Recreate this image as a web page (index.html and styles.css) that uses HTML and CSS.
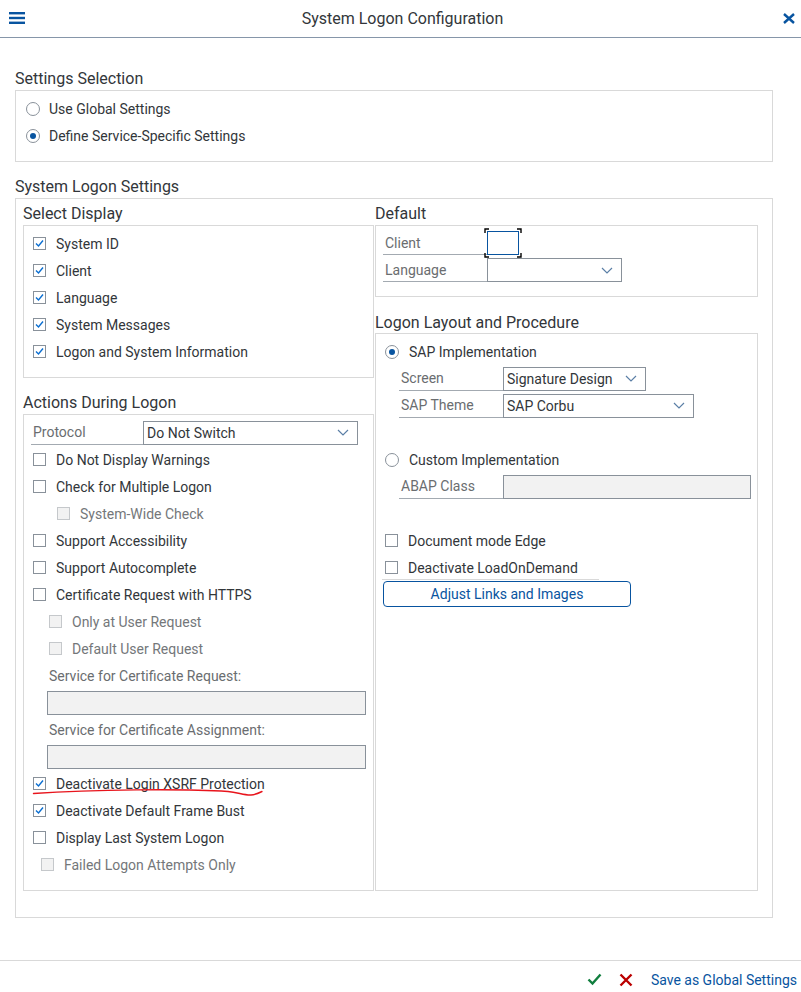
FILE: index.html
```html
<!DOCTYPE html>
<html lang="en">
<head>
<meta charset="utf-8">
<title>System Logon Configuration</title>
<link rel="stylesheet" href="styles.css">
</head>
<body>
<div class="page">
  <header class="bar">
    <svg class="menu" width="16" height="12" viewBox="0 0 16 12"><rect x="0" y="0" width="16" height="2.4" fill="#0854a0"/><rect x="0" y="4.8" width="16" height="2.4" fill="#0854a0"/><rect x="0" y="9.6" width="16" height="2.4" fill="#0854a0"/></svg>
    <div class="bar-title">System Logon Configuration</div>
    <svg class="close" width="12" height="11" viewBox="0 0 12 11"><path d="M1 1L11 10M11 1L1 10" stroke="#0854a0" stroke-width="2.4" fill="none"/></svg>
  </header>

  <main class="content">
    <div class="sec-title first">Settings Selection</div>
    <div class="box settings">
      <div class="row"><span class="radio"></span><span class="txt">Use Global Settings</span></div>
      <div class="row"><span class="radio on"></span><span class="txt">Define Service-Specific Settings</span></div>
    </div>

    <div class="sec-title">System Logon Settings</div>
    <div class="box outer">
      <div class="col">
        <div class="sub-title">Select Display</div>
        <div class="box sub display">
          <div class="row"><span class="cb on"><svg viewBox="0 0 11 11"><path d="M2 5.5L4.5 8L9 2.5" fill="none" stroke="#0a6ed1" stroke-width="1.4"/></svg></span><span class="txt">System ID</span></div>
          <div class="row"><span class="cb on"><svg viewBox="0 0 11 11"><path d="M2 5.5L4.5 8L9 2.5" fill="none" stroke="#0a6ed1" stroke-width="1.4"/></svg></span><span class="txt">Client</span></div>
          <div class="row"><span class="cb on"><svg viewBox="0 0 11 11"><path d="M2 5.5L4.5 8L9 2.5" fill="none" stroke="#0a6ed1" stroke-width="1.4"/></svg></span><span class="txt">Language</span></div>
          <div class="row"><span class="cb on"><svg viewBox="0 0 11 11"><path d="M2 5.5L4.5 8L9 2.5" fill="none" stroke="#0a6ed1" stroke-width="1.4"/></svg></span><span class="txt">System Messages</span></div>
          <div class="row"><span class="cb on"><svg viewBox="0 0 11 11"><path d="M2 5.5L4.5 8L9 2.5" fill="none" stroke="#0a6ed1" stroke-width="1.4"/></svg></span><span class="txt">Logon and System Information</span></div>
        </div>

        <div class="sub-title gap">Actions During Logon</div>
        <div class="box sub actions">
          <div class="row">
            <span class="flabel proto">Protocol</span>
            <span class="select w-proto"><span>Do Not Switch</span><svg width="12" height="7" viewBox="0 0 12 7"><path d="M1 1l5 5 5-5" fill="none" stroke="#5b7fa6" stroke-width="1.2"/></svg></span>
          </div>
          <div class="row"><span class="cb"></span><span class="txt">Do Not Display Warnings</span></div>
          <div class="row"><span class="cb"></span><span class="txt">Check for Multiple Logon</span></div>
          <div class="row ind2"><span class="cb dis"></span><span class="txt dim">System-Wide Check</span></div>
          <div class="row"><span class="cb"></span><span class="txt">Support Accessibility</span></div>
          <div class="row"><span class="cb"></span><span class="txt">Support Autocomplete</span></div>
          <div class="row"><span class="cb"></span><span class="txt">Certificate Request with HTTPS</span></div>
          <div class="row ind1"><span class="cb dis"></span><span class="txt dim">Only at User Request</span></div>
          <div class="row ind1"><span class="cb dis"></span><span class="txt dim">Default User Request</span></div>
          <div class="row lbl-row"><span class="dim">Service for Certificate Request:</span></div>
          <div class="row"><span class="input dis w-svc"></span></div>
          <div class="row lbl-row"><span class="dim">Service for Certificate Assignment:</span></div>
          <div class="row"><span class="input dis w-svc"></span></div>
          <div class="row mark">
            <span class="cb on"><svg viewBox="0 0 11 11"><path d="M2 5.5L4.5 8L9 2.5" fill="none" stroke="#0a6ed1" stroke-width="1.4"/></svg></span><span class="txt">Deactivate Login XSRF Protection</span>
            <svg class="scribble" width="232" height="30" viewBox="0 0 232 30"><path d="M0.5 23.5C60 19.5 150 18.5 195 21.5C205 22.5 212 25.5 218 25C222 24.8 226 23 229 21.5" fill="none" stroke="#e8141c" stroke-width="1.4" stroke-linecap="round"/></svg>
          </div>
          <div class="row"><span class="cb on"><svg viewBox="0 0 11 11"><path d="M2 5.5L4.5 8L9 2.5" fill="none" stroke="#0a6ed1" stroke-width="1.4"/></svg></span><span class="txt">Deactivate Default Frame Bust</span></div>
          <div class="row"><span class="cb"></span><span class="txt">Display Last System Logon</span></div>
          <div class="row ind0"><span class="cb dis"></span><span class="txt dim">Failed Logon Attempts Only</span></div>
        </div>
      </div>

      <div class="col right">
        <div class="sub-title">Default</div>
        <div class="box sub defaults">
          <div class="frow">
            <span class="flabel">Client</span>
            <span class="focus-wrap">
              <span class="input focus w-client"></span>
              <svg class="brackets" width="38" height="30" viewBox="0 0 38 30"><path d="M1 5V1H5M33 1H37V5M37 25V29H33M5 29H1V25" fill="none" stroke="#000" stroke-width="1.4"/></svg>
            </span>
          </div>
          <div class="frow">
            <span class="flabel">Language</span>
            <span class="select w-lang"><span></span><svg width="12" height="7" viewBox="0 0 12 7"><path d="M1 1l5 5 5-5" fill="none" stroke="#5b7fa6" stroke-width="1.2"/></svg></span>
          </div>
        </div>

        <div class="sub-title gap lower">Logon Layout and Procedure</div>
        <div class="box sub layout">
          <div class="row"><span class="radio on wide"></span><span class="txt">SAP Implementation</span></div>
          <div class="row sub-field">
            <span class="flabel">Screen</span>
            <span class="select w-screen"><span>Signature Design</span><svg width="12" height="7" viewBox="0 0 12 7"><path d="M1 1l5 5 5-5" fill="none" stroke="#5b7fa6" stroke-width="1.2"/></svg></span>
          </div>
          <div class="row sub-field">
            <span class="flabel">SAP Theme</span>
            <span class="select w-theme"><span>SAP Corbu</span><svg width="12" height="7" viewBox="0 0 12 7"><path d="M1 1l5 5 5-5" fill="none" stroke="#5b7fa6" stroke-width="1.2"/></svg></span>
          </div>
          <div class="row"></div>
          <div class="row"><span class="radio wide"></span><span class="txt">Custom Implementation</span></div>
          <div class="row sub-field">
            <span class="flabel">ABAP Class</span>
            <span class="input dis w-abap"></span>
          </div>
          <div class="row"></div>
          <div class="row"><span class="cb"></span><span class="txt">Document mode Edge</span></div>
          <div class="row lod"><span class="cb"></span><span class="txt">Deactivate LoadOnDemand</span></div>
          <button class="btn" type="button">Adjust Links and Images</button>
        </div>
      </div>
    </div>
  </main>

  <footer class="foot">
    <svg class="ok" width="15" height="13" viewBox="0 0 15 13"><path d="M1.5 6.5L5.5 10.5L13.5 1.5" fill="none" stroke="#107e3e" stroke-width="2.4"/></svg>
    <svg class="cancel" width="14" height="14" viewBox="0 0 14 14"><path d="M1.5 1.5L12.5 12.5M12.5 1.5L1.5 12.5" fill="none" stroke="#bb0000" stroke-width="2.4"/></svg>
    <span class="save">Save as Global Settings</span>
  </footer>
</div>
</body>
</html>
```

FILE: styles.css
```css
* { box-sizing: border-box; }

html, body {
  margin: 0;
  padding: 0;
  background: #ffffff;
}

body {
  font-family: Roboto, "Liberation Sans", Arial, sans-serif;
  font-size: 14px;
  color: #32363a;
}

.page {
  display: flex;
  flex-direction: column;
  height: 100vh;
}

/* header */
.bar {
  height: 38px;
  flex: none;
  display: flex;
  align-items: center;
  justify-content: space-between;
  padding: 0 6px 1px 9px;
  border-bottom: 1px solid #8696a9;
}

.bar-title {
  font-size: 16px;
  color: #32363a;
  padding-right: 3px;
}

.menu { display: block; }
.close { display: block; }

/* content */
.content {
  flex: 1;
  padding: 0 28px 0 15px;
}

.sec-title {
  font-size: 16px;
  line-height: 20px;
  margin-top: 15px;
  padding-bottom: 1px;
}

.sec-title.first {
  margin-top: 31px;
  padding-bottom: 1px;
}

.box {
  border: 1px solid #d9d9d9;
}

.settings {
  padding: 4px 0 12px 10px;
}

.row {
  display: flex;
  align-items: center;
  height: 27px;
  position: relative;
}

.txt { white-space: nowrap; }

.radio {
  width: 14px;
  height: 14px;
  border: 1px solid #89919a;
  border-radius: 50%;
  margin-right: 9px;
  flex: none;
  display: flex;
  align-items: center;
  justify-content: center;
  background: #fff;
}

.radio.wide { margin-right: 10px; }

.radio.on::after {
  content: "";
  width: 6px;
  height: 6px;
  border-radius: 50%;
  background: #0854a0;
}

.outer {
  display: grid;
  grid-template-columns: 351px 383px;
  column-gap: 1px;
  padding: 4px 15px 26px 7px;
}

.col {
  display: flex;
  flex-direction: column;
}

.sub-title {
  font-size: 16px;
  line-height: 20px;
  padding-top: 1px;
  padding-bottom: 1px;
}

.sub-title.gap {
  margin-top: 14px;
}

.sub-title.lower {
  padding-top: 2px;
  padding-bottom: 0;
}

.sub {
  padding: 4px 0 12px 9px;
}

.cb {
  width: 13px;
  height: 13px;
  border: 1px solid #89919a;
  background: #fff;
  flex: none;
  margin-right: 10px;
  display: flex;
  align-items: center;
  justify-content: center;
}

.cb svg {
  width: 11px;
  height: 11px;
  display: block;
}

.cb.dis {
  background: #f2f2f2;
  border-color: #c5c8cb;
}

.dim { color: #6a6d70; }
.txt.dim { color: #74777a; }

.ind2 { padding-left: 24px; }
.ind1 { padding-left: 16px; }
.ind0 { padding-left: 8px; }

.lbl-row { padding-left: 16px; }

/* fields */
.flabel {
  width: 104px;
  height: 24px;
  flex: none;
  border-bottom: 1px solid #a3aab1;
  color: #6a6d70;
  padding-left: 2px;
  display: flex;
  align-items: center;
  white-space: nowrap;
}

.actions .flabel.proto {
  width: 112px;
  margin-left: -2px;
}

.select {
  height: 24px;
  border: 1px solid #89919a;
  background: #fff;
  display: flex;
  align-items: center;
  justify-content: space-between;
  padding: 0 8px 0 3px;
  color: #32363a;
  white-space: nowrap;
  flex: none;
}

.select svg { display: block; flex: none; }

.input {
  height: 24px;
  border: 1px solid #89919a;
  background: #fff;
  display: block;
  flex: none;
}

.input.dis { background: #f2f2f2; }

.w-proto { width: 215px; }
.w-svc { width: 319px; margin-left: 14px; }
.w-lang { width: 135px; }
.w-client { width: 32px; }
.w-screen { width: 143px; }
.w-theme { width: 191px; }
.w-abap { width: 248px; }

/* red hand-drawn mark */
.mark .scribble {
  position: absolute;
  left: 0;
  top: 0;
  overflow: visible;
}

/* default box */
.defaults {
  padding: 5px 0 14px 7px;
  display: flex;
  flex-direction: column;
  gap: 3px;
}

.frow {
  display: flex;
  align-items: flex-start;
  height: 24px;
}

.focus-wrap {
  position: relative;
  display: block;
  width: 32px;
  height: 24px;
}

.input.focus {
  border: 1px solid #0854a0;
}

.brackets {
  position: absolute;
  left: -3px;
  top: -3px;
}

/* layout box */
.layout {
  flex: 1;
  padding: 4px 0 12px 9px;
}

.sub-field { padding-left: 14px; }

.lod {
  height: 24px;
  margin-top: 2px;
  margin-left: -3px;
  padding-left: 3px;
  width: 217px;
  border-bottom: 1px solid #d9d9d9;
}

.btn {
  display: block;
  margin: 1px 0 0 -2px;
  width: 248px;
  height: 26px;
  border: 1px solid #0854a0;
  border-radius: 4px;
  background: #fff;
  color: #0854a0;
  font-family: Roboto, "Liberation Sans", Arial, sans-serif;
  font-size: 14px;
  padding: 0;
}

/* footer */
.foot {
  flex: none;
  height: 32px;
  border-top: 1px solid #d9d9d9;
  display: flex;
  align-items: center;
  justify-content: flex-end;
  padding: 6px 4px 0 0;
}

.ok { display: block; margin-right: 17px; }
.cancel { display: block; margin-right: 18px; }
.save { color: #0854a0; font-size: 14px; }
```
